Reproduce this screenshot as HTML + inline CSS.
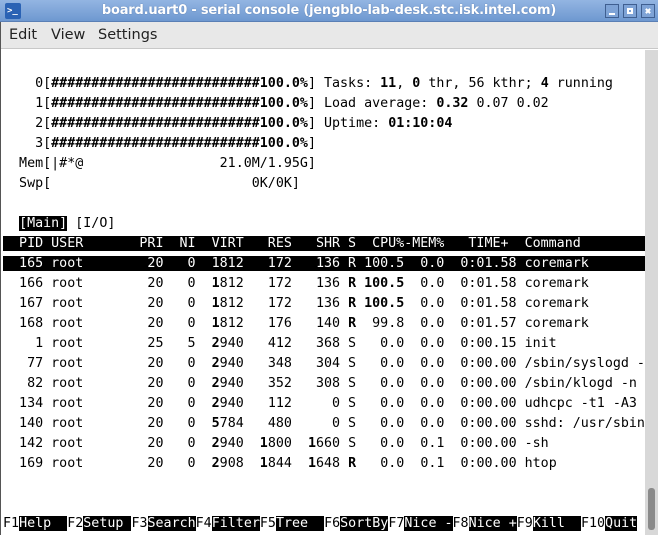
<!DOCTYPE html>
<html><head><meta charset="utf-8"><style>
*{margin:0;padding:0;box-sizing:border-box}
body{width:658px;height:535px;overflow:hidden;background:#fff;position:relative;font-family:"Liberation Sans","DejaVu Sans",sans-serif}
#title{position:absolute;left:0;top:0;width:658px;height:22px;background:linear-gradient(#93b5e2,#6e98d0);border-bottom:1px solid #5a7fb5}
#title .t{position:absolute;left:0;right:0;top:3px;text-align:center;color:#fff;font-size:13px;font-weight:bold;font-family:"DejaVu Sans",sans-serif;letter-spacing:-0.2px;text-shadow:0 0 1px #4a6a9a}
#icon{position:absolute;left:5px;top:3px;width:16px;height:16px;background:#2a62b4;border-radius:2px;color:#fff;font:bold 9px "DejaVu Sans Mono",monospace;line-height:16px;padding-left:2px}
.btn{position:absolute;top:4px;width:14px;height:14px;border:1px solid #3f5f90;background:#7ea3d6}
.btn i{position:absolute;background:#fff}
#menu{position:absolute;left:0;top:22px;width:658px;height:27px;background:#e8e8e8;border-bottom:1px solid #c8c8c8;font-size:14.5px;color:#222;font-family:"DejaVu Sans",sans-serif}
#menu span{position:absolute;top:5px}
#term{position:absolute;left:3px;top:54px;font:13.33px/20px "DejaVu Sans Mono",monospace;color:#000;white-space:pre}
.r{height:20px}
.k{background:#000;color:#fff}
b{font-weight:bold}
#lb{position:absolute;left:0;top:22px;width:1px;height:513px;background:#555}
#sb{position:absolute;left:645px;top:50px;width:13px;height:485px;background:#d8d8d8}
#th{position:absolute;left:3px;top:438px;width:7px;height:42px;background:#8a8a8a;border-radius:3px}
</style></head><body>
<div id="title"><div id="icon">&gt;_</div><div class="t">board.uart0 - serial console (jengblo-lab-desk.stc.isk.intel.com)</div>
<div class="btn" style="left:605px"><i style="left:3px;top:8px;width:6px;height:2px"></i></div>
<div class="btn" style="left:623px"><i style="left:3px;top:3px;width:6px;height:6px;background:none;border:2px solid #fff"></i></div>
<div class="btn" style="left:641px"><i style="left:3px;top:5px;width:6px;height:2px;transform:rotate(45deg)"></i><i style="left:3px;top:5px;width:6px;height:2px;transform:rotate(-45deg)"></i></div>
</div>
<div id="menu"><span style="left:9px">Edit</span><span style="left:51px">View</span><span style="left:98px">Settings</span></div>
<div id="lb"></div>
<div id="term"><div class="r"> </div><div class="r">    0[<b>##########################100.0%</b>] Tasks: <b>11</b>, <b>0</b> thr, 56 kthr; <b>4</b> running</div><div class="r">    1[<b>##########################100.0%</b>] Load average: <b>0.32</b> 0.07 0.02</div><div class="r">    2[<b>##########################100.0%</b>] Uptime: <b>01:10:04</b></div><div class="r">    3[<b>##########################100.0%</b>]</div><div class="r">  Mem[|#*@                 21.0M/1.95G]</div><div class="r">  Swp[                         0K/0K]</div><div class="r"> </div><div class="r">  <span class="k">[Main]</span> [I/O]</div><div class="r"><span class="k">  PID USER       PRI  NI  VIRT   RES   SHR S  CPU%-MEM%   TIME+  Command        </span></div><div class="r"><span class="k">  165 root        20   0  1812   172   136 R 100.5  0.0  0:01.58 coremark       </span></div><div class="r">  166 root        20   0  <b>1</b>812   172   136 <b>R 100.5</b>  0.0  0:01.58 coremark</div><div class="r">  167 root        20   0  <b>1</b>812   172   136 <b>R 100.5</b>  0.0  0:01.58 coremark</div><div class="r">  168 root        20   0  <b>1</b>812   176   140 <b>R</b>  99.8  0.0  0:01.57 coremark</div><div class="r">    1 root        25   5  <b>2</b>940   412   368 S   0.0  0.0  0:00.15 init</div><div class="r">   77 root        20   0  <b>2</b>940   348   304 S   0.0  0.0  0:00.00 /sbin/syslogd -</div><div class="r">   82 root        20   0  <b>2</b>940   352   308 S   0.0  0.0  0:00.00 /sbin/klogd -n</div><div class="r">  134 root        20   0  <b>2</b>940   112     0 S   0.0  0.0  0:00.00 udhcpc -t1 -A3</div><div class="r">  140 root        20   0  <b>5</b>784   480     0 S   0.0  0.0  0:00.00 sshd: /usr/sbin</div><div class="r">  142 root        20   0  <b>2</b>940  <b>1</b>800  <b>1</b>660 S   0.0  0.1  0:00.00 -sh</div><div class="r">  169 root        20   0  <b>2</b>908  <b>1</b>844  <b>1</b>648 <b>R</b>   0.0  0.1  0:00.00 htop</div><div class="r"> </div><div class="r"> </div><div class="r">F1<span class="k">Help  </span>F2<span class="k">Setup </span>F3<span class="k">Search</span>F4<span class="k">Filter</span>F5<span class="k">Tree  </span>F6<span class="k">SortBy</span>F7<span class="k">Nice -</span>F8<span class="k">Nice +</span>F9<span class="k">Kill  </span>F10<span class="k">Quit</span></div></div>
<div id="sb"><div id="th"></div></div>
</body></html>
